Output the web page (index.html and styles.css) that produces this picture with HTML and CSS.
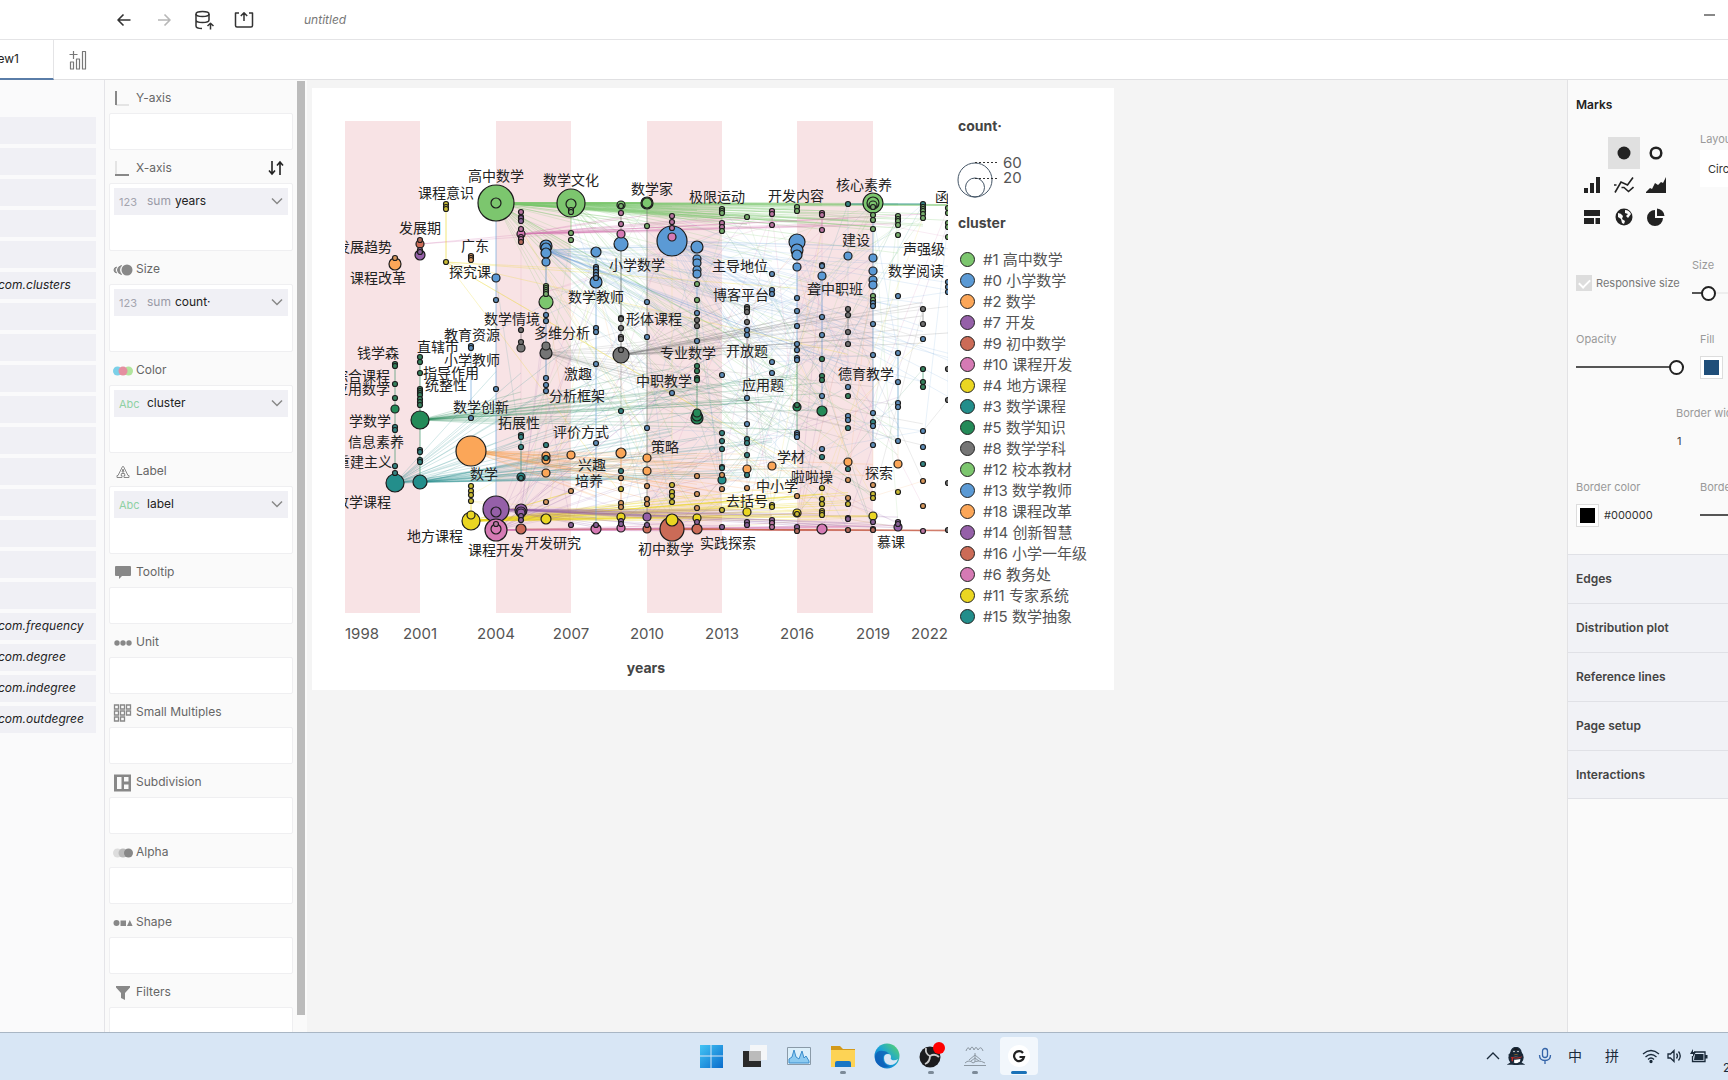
FILE: index.html
```html
<!DOCTYPE html>
<html lang="zh-CN">
<head>
<meta charset="utf-8">
<title>untitled</title>
<link rel="stylesheet" href="styles.css">
</head>
<body>
<header class="toolbar">
  <button class="tool" aria-label="Undo"><svg width="20" height="20" viewBox="0 0 20 20"><path d="M16.500 10H4.500M9.500 4.500 4 10l5.500 5.500" stroke-width="1.600"/></svg></button>
  <button class="tool dim" aria-label="Redo"><svg width="20" height="20" viewBox="0 0 20 20"><path d="M4 10h11.500M10.500 4.500 16 10l-5.500 5.500" stroke-width="1.600"/></svg></button>
  <button class="tool" aria-label="Data source"><svg width="20" height="20" viewBox="0 0 20 20"><ellipse cx="8.500" cy="4" rx="6.500" ry="2.500"/><path d="M2 4v12c0 1.400 2.500 2.500 6 2.500M15 4v6M2 10c0 1.500 2.700 2.500 6.500 2.500 2.800 0 6.500-.8 6.500-2.500M16.500 19.500v-6M13.500 16l3-2.800 3 2.800"/></svg></button>
  <button class="tool" aria-label="Export"><svg width="20" height="20" viewBox="0 0 20 20"><path d="M5 3H1.500v12.500q0 1.500 1.500 1.500h14q1.500 0 1.500-1.500V3H15M10 11V3M6.800 6 10 2.800 13.200 6"/></svg></button>
  <span class="doc-name">untitled</span>
  <button class="minimize" aria-label="Minimize"></button>
</header>
<nav class="tabs">
  <a class="tab" href="#view1">View1</a>
  <button class="tool add-view" aria-label="Add view"><svg width="20" height="20" viewBox="0 0 20 20"><path d="M2.500 12h3v7h-3zM8.500 9h3v10h-3zM14.500 1.500h3V19h-3zM5.500 1v8M1.500 4.500h8" stroke-width="1.200"/></svg></button>
</nav>
<main class="workspace">
  <ul class="fields">
    <li></li><li></li><li></li><li></li><li></li><li>com.clusters</li><li></li><li></li><li></li><li></li>
    <li></li><li></li><li></li><li></li><li></li><li></li><li>com.frequency</li><li>com.degree</li><li>com.indegree</li><li>com.outdegree</li>
  </ul>
  <div class="shelves">
    <section><h3><svg viewBox="0 0 20 20"><path d="M3 17h13" stroke="#ddd" stroke-width="1.500"/><path d="M3 3v14" stroke="#888" stroke-width="2"/></svg>Y-axis</h3><div class="drop"></div></section>
    <section><h3><svg viewBox="0 0 20 20"><path d="M3 3v14" stroke="#ddd" stroke-width="1.500"/><path d="M2 17h14" stroke="#888" stroke-width="2"/></svg>X-axis<button class="swap" aria-label="Sort"><svg viewBox="0 0 20 20" fill="none" stroke="#222" stroke-width="1.600"><path d="M6 3v13M3 12.500 6 16l3-3.500M14 17V4M11 7.500l3-3.500 3 3.500"/></svg></button></h3><div class="drop tall"><button class="pill"><i class="num">123</i><em>sum</em>years<svg viewBox="0 0 12 8"><path d="M1 1.500 6 6.500 11 1.500"/></svg></button></div></section>
    <section><h3><svg viewBox="0 0 20 20" fill="#888"><circle cx="14" cy="11" r="5.500"/><path d="M8.500 6.500q-4 4.500 0 9-4-1-4-4.500t4-4.500zM3.500 8q-3 3 0 6-2.500-.5-2.500-3t2.500-3z" stroke="#888"/></svg>Size</h3><div class="drop tall"><button class="pill"><i class="num">123</i><em>sum</em>count·<svg viewBox="0 0 12 8"><path d="M1 1.500 6 6.500 11 1.500"/></svg></button></div></section>
    <section><h3><svg viewBox="0 0 20 20"><circle cx="4.500" cy="11" r="4.500" fill="#7bd0e8"/><circle cx="15.500" cy="11" r="4.500" fill="#b2e49e"/><circle cx="10" cy="11" r="4.500" fill="#e58fa0"/></svg>Color</h3><div class="drop tall"><button class="pill"><i>Abc</i>cluster<svg viewBox="0 0 12 8"><path d="M1 1.500 6 6.500 11 1.500"/></svg></button></div></section>
    <section><h3><svg viewBox="0 0 20 20" fill="none" stroke="#888"><path d="M4 16.500h5v-2H8l.5-2h3l.5 2h-1v2h5v-2h-1L10.500 5.500h-1L5 14.500H4zM9 11l1-3 1 3z"/></svg>Label</h3><div class="drop tall"><button class="pill"><i>Abc</i>label<svg viewBox="0 0 12 8"><path d="M1 1.500 6 6.500 11 1.500"/></svg></button></div></section>
    <section><h3><svg viewBox="0 0 20 20" fill="#888"><path d="M3 4h14q1 0 1 1v8q0 1-1 1H9l-3 3v-3H3q-1 0-1-1V5q0-1 1-1z"/></svg>Tooltip</h3><div class="drop"></div></section>
    <section><h3><svg viewBox="0 0 20 20" fill="#888"><circle cx="4" cy="11" r="2.700"/><circle cx="10" cy="11" r="2.700"/><circle cx="16" cy="11" r="2.700"/></svg>Unit</h3><div class="drop"></div></section>
    <section><h3><svg viewBox="0 0 20 20" fill="none" stroke="#888" stroke-width="1.300"><path d="M1.500 3h4v4h-4zM7.500 3h4v4h-4zM13.500 3h4v4h-4zM1.500 9h4v4h-4zM7.500 9h4v4h-4zM13.500 9h4v4h-4zM1.500 15h4v4h-4zM7.500 15h4v4h-4z"/></svg>Small Multiples</h3><div class="drop"></div></section>
    <section><h3><svg viewBox="0 0 20 20"><path d="M1 2.500h17v17H1zM4 5v12h4.500V5zM11 5v4.500h4.500V5zM11 12.500V17h4.500v-4.500z" fill="#888" fill-rule="evenodd"/></svg>Subdivision</h3><div class="drop"></div></section>
    <section><h3><svg viewBox="0 0 20 20"><circle cx="4.500" cy="11" r="4.500" fill="#ddd"/><circle cx="10" cy="11" r="4.500" fill="#bbb"/><circle cx="15.500" cy="11" r="4.500" fill="#888"/></svg>Alpha</h3><div class="drop"></div></section>
    <section><h3><svg viewBox="0 0 20 20" fill="#888"><circle cx="3.500" cy="11" r="3"/><path d="M7.500 8.500h5.500v5.500H7.500zM14 14l2.800-6 2.800 6z"/></svg>Shape</h3><div class="drop"></div></section>
    <section><h3><svg viewBox="0 0 20 20" fill="#888"><path d="M3 4h14v1.500L12 11v7l-4-2v-5L3 5.500z"/></svg>Filters</h3><div class="drop"></div></section>
  </div>
  <div class="scrollbar"><span></span></div>
  <div class="canvas">
    <figure class="sheet">
      <svg id="plot" class="plot" width="636" height="602" viewBox="312 88 636 602" role="img" aria-label="years"></svg>
      <figcaption class="legend">
        <h4>count·</h4>
        <svg class="sizes" width="80" height="41" viewBox="0 0 80 41"><g fill="none" stroke="#456"><circle cx="17" cy="22" r="17"/><circle cx="17" cy="29.500" r="9.500"/><path d="M17 4.500h22M17 20.500h22" stroke-dasharray="2 2" stroke="#333"/></g><text x="45" y="10">60</text><text x="45" y="25">20</text></svg>
        <h4>cluster</h4>
        <ul id="clusters" class="clusters"></ul>
      </figcaption>
    </figure>
  </div>
  <aside class="inspector">
    <div class="inner">
      <h2>Marks</h2>
      <div class="marks">
        <div class="types">
          <span></span>
          <button class="on" aria-label="Point"><svg viewBox="0 0 20 20"><circle cx="10" cy="10" r="6.500"/></svg></button>
          <button aria-label="Ring"><svg viewBox="0 0 20 20"><circle cx="10" cy="10" r="5.300" fill="none" stroke="#222" stroke-width="2.500"/></svg></button>
          <button aria-label="Bar"><svg viewBox="0 0 20 20"><path d="M2 13h4v5H2zM8 8h4v10H8zM14 2h4v16h-4z"/></svg></button>
          <button aria-label="Line"><svg viewBox="0 0 20 20" fill="none" stroke="#222" stroke-width="1.600"><path d="M1 17.500 7 7l6.500 3L19 2.500M0 10h2.500M7.500 12.500H10l4.500 4 5-4.500"/></svg></button>
          <button aria-label="Area"><svg viewBox="0 0 20 20"><path d="M0 18v-1l4-4 2 1 3-6 3 2 3-3 2 1 3-6v16z"/></svg></button>
          <button aria-label="Treemap"><svg viewBox="0 0 20 20"><path d="M2 3h16v6H2zM2 11h10v6H2zM13.500 11H18v6h-4.500z"/></svg></button>
          <button aria-label="Map"><svg viewBox="0 0 20 20"><circle cx="10" cy="10" r="8.500"/><path d="M4 6q3 0 5 3l-1 3 3 2-1 3-2-1-1-4-3-2zM11 3q4 0 6 4l-3 4-2-2 2-2-3-1z" fill="#fafafa"/></svg></button>
          <button aria-label="Pie"><svg viewBox="0 0 20 20"><path d="M9 3v8h8a8 8 0 1 1-8-8zM11 1.500A8 8 0 0 1 18.500 9H11z"/></svg></button>
        </div>
        <div class="layout"><label for="layout">Layout</label><select id="layout"><option>Circle</option></select></div>
      </div>
      <div class="row">
        <label class="check"><input type="checkbox" checked disabled>Responsive size</label>
        <div class="field"><label for="size">Size</label><div class="control"><input id="size" type="range" class="low" value="10"></div></div>
      </div>
      <div class="row">
        <div class="field half"><label for="opacity">Opacity</label><div class="control"><input id="opacity" type="range" value="100"></div></div>
        <div class="field"><label for="fill">Fill</label><div class="control"><input id="fill" type="color" value="#1f4e79"></div></div>
      </div>
      <div class="row indent">
        <div class="field"><label for="bw">Border width</label><div class="control"><input id="bw" type="text" value="1"></div></div>
      </div>
      <div class="row">
        <div class="field half"><label for="bc">Border color</label><div class="control"><input id="bc" type="color" value="#000000">#000000</div></div>
        <div class="field"><label for="bo">Border opacity</label><div class="control"><input id="bo" type="range" value="100"></div></div>
      </div>
    </div>
    <button class="fold">Edges</button><button class="fold">Distribution plot</button><button class="fold">Reference lines</button><button class="fold">Page setup</button><button class="fold">Interactions</button>
  </aside>
</main>
<footer class="taskbar">
  <div class="apps">
    <button aria-label="Start"><svg viewBox="0 0 26 26"><defs><linearGradient id="w" x1="0" y1="0" x2="1" y2="1"><stop stop-color="#44c5f5"/><stop offset="1" stop-color="#0a6ccc"/></linearGradient></defs><path d="M2 2h10.500v10.500H2zM13.500 2H25v10.500H13.500zM2 13.500h10.500V25H2zM13.500 13.500H25V25H13.500z" fill="url(#w)"/></svg></button>
    <button aria-label="Task view"><svg viewBox="0 0 26 26"><path d="M1 8h18v16H1z" fill="#2a2a2a"/><path d="M8 2h17v15H8z" fill="#f4f6f8"/><path d="M7 8h12v10H7z" fill="#bbb"/></svg></button>
    <button aria-label="Monitor"><svg viewBox="0 0 26 26"><path d="M1.500 4.500h23v17h-23z" fill="#dceffa" stroke="#8a9aa8"/><path d="M3 20v-4l3-2 2-7 2 7 3 2 3-8 2 7 2-2 3 5v2z" fill="#8ccaf0" stroke="#3a8dcc"/></svg></button>
    <button class="run" aria-label="Files"><svg viewBox="0 0 26 26"><path d="M1 3h9l3 3h12v4H1z" fill="#d49a1a"/><path d="M1 7h24v17H1z" fill="#fdd355"/><path d="M5 24v-4q0-2 2-2h12q2 0 2 2v4z" fill="#1976c4"/></svg></button>
    <button aria-label="Edge"><svg viewBox="0 0 26 26"><defs><linearGradient id="e" x1="0" y1="1" x2="1" y2="0"><stop stop-color="#0b5cc0"/><stop offset=".5" stop-color="#1aa3d8"/><stop offset="1" stop-color="#5fd860"/></linearGradient></defs><circle cx="13" cy="13" r="12.500" fill="url(#e)"/><path d="M10 15q0-4 4-4 3 0 3 3-1 2 1 3 3 1 6-1-2 6-8 6-6-1-6-7z" fill="#d8e6f5"/><path d="M1 13q2-6 8-5 4 0 6 3-5-1-6 4 0 7 7 8-9 4-14-4-1-3-1-6z" fill="#0d58b4" opacity=".7"/></svg></button>
    <button class="run" aria-label="Recorder"><svg viewBox="0 0 26 26"><circle cx="12" cy="14" r="10.500" fill="#1c1c1e"/><path d="M12 13q-5-2-4-8M12 13q5-3 9 1M12 13q0 6-5 8" fill="none" stroke="#ccc" stroke-width="1.800"/><circle cx="21" cy="5" r="6" fill="#f00"/></svg></button>
    <button class="run" aria-label="Gallery"><svg viewBox="0 0 26 26" fill="none" stroke="#8d98a2"><path d="M4 8q2-6 4-1 2-6 4 0 2-5 4 0 3-5 5 1M13 10v9M7 17l6-5 6 5M9 18l4-3 4 3M3 20q4-4 8 0 5-4 12 0M2 22.500h22"/></svg></button>
    <button class="run active" aria-label="Graphs"><svg viewBox="0 0 26 26"><circle cx="13" cy="13" r="11" fill="#fff"/><path d="M17 10a5 5 0 1 0 1 4h-4.500" fill="none" stroke="#222" stroke-width="2.200"/></svg></button>
  </div>
  <div class="tray">
    <svg width="14" viewBox="0 0 14 16"><path d="M1 11l6-6 6 6"/></svg>
    <svg width="18" viewBox="0 0 18 18" stroke="none"><ellipse cx="9" cy="10.500" rx="7" ry="7" fill="#16181c"/><circle cx="9" cy="5.500" r="5" fill="#16181c"/><ellipse cx="9" cy="12.500" rx="5" ry="4.500" fill="#fff"/><path d="M2.500 8.500q6.500 3 13 0v2q-4 2-9 1.500V15H4v-3.500z" fill="#d8281e"/><circle cx="7" cy="4.500" r="1.400" fill="#fff"/><circle cx="11" cy="4.500" r="1.400" fill="#fff"/><path d="M5.500 7.500q3.500-2 7 0-3.500 2-7 0zM2 17q3-2 6 0zM16 17q-3-2-6 0z" fill="#f5a31c"/></svg>
    <svg class="mic" width="14" viewBox="0 0 14 18"><rect x="4.500" y="1.500" width="5" height="9" rx="2.500"/><path d="M1.500 8q0 5.500 5.500 5.500T12.500 8M7 14v3"/></svg>
    <span>中</span><span>拼</span>
    <svg width="18" viewBox="0 0 18 16"><path d="M1 6q8-7 16 0M3.500 9q5.500-5 11 0M6 11.500q3-3 6 0"/><circle cx="9" cy="13.500" r="1" fill="#1a2a3a"/></svg>
    <svg width="16" viewBox="0 0 16 16"><path d="M1 6h2.500L7 2.500v11L3.500 10H1zM9.500 5.500q2 2.500 0 5M11.500 3.500q3.500 4.500 0 9"/></svg>
    <svg width="18" viewBox="0 0 18 16"><path d="M4 4h11v9.500H2.500V8"/><path d="M5 6h8.500v6H4zM15 7h2.500v3.500H15zM3 1 0 6h3v3l3-5H3z" fill="#1a2a3a" stroke="none"/></svg>
    <time>2022</time>
  </div>
</footer>
<script src="script.js"></script>
</body>
</html>
```
FILE: styles.css
```css
* { box-sizing: border-box; margin: 0; padding: 0; }
body { height: 100vh; display: flex; flex-direction: column; overflow: hidden; background: #fff; color: #222; font: 12px/16px Inter, "Noto Sans CJK SC", sans-serif; }
button { border: 0; background: none; font: inherit; color: inherit; }
ul { list-style: none; }
a { color: inherit; text-decoration: none; }

.toolbar { flex: none; height: 40px; display: flex; align-items: center; gap: 20px; padding: 0 13px 0 114px; border-bottom: 1px solid #e4e4e6; }
.tool { width: 20px; height: 20px; }
.tool svg { display: block; fill: none; stroke: #333; stroke-width: 1.500; stroke-linejoin: round; }
.tool.dim { opacity: .35; }
.doc-name { margin-left: 30px; color: #777; font-style: italic; }
.minimize { width: 11px; height: 2px; margin: 0 0 10px auto; background: #888; }

.tabs { flex: none; height: 40px; display: flex; align-items: center; gap: 14px; border-bottom: 1px solid #e0e0e2; }
.tab { width: 54px; height: 40px; display: flex; justify-content: flex-end; padding: 11px 34px 0 0; border-right: 1px solid #e4e4e6; border-bottom: 2px solid #5a7da8; }
.add-view svg { stroke: #777; }

.workspace { flex: 1; min-height: 0; display: flex; }
.fields { flex: none; width: 105px; padding: 37px 8px 0 0; display: flex; flex-direction: column; gap: 4px; background: #fafafb; border-right: 1px solid #e4e4e8; overflow: hidden; font-style: italic; text-indent: -2px; }
.fields li { flex: none; height: 27px; line-height: 26px; background: #f0f0f5; }

.shelves { flex: none; width: 192px; padding: 0 4px; overflow: hidden; background: #fafafa; }
.shelves h3 { height: 33px; display: flex; align-items: center; gap: 3px; padding: 3px 7px 0 4px; font-size: 12px; font-weight: 400; color: #666; }
.shelves h3 svg { width: 20px; height: 20px; overflow: visible; }
.swap { margin-left: auto; }
.swap svg { display: block; }
.drop { height: 37px; padding: 4px; background: #fff; border: 1px solid #efeff1; border-radius: 2px; }
.drop.tall { height: 68px; }
.pill { width: 100%; height: 27px; display: flex; align-items: center; padding: 0 5px 2px; background: #f0f0f5; color: #222; }
.pill i { width: 28px; font-size: 11px; font-style: normal; color: #8fd0a4; text-align: left; padding-top: 2px; }
.pill i.num { color: #a4a4ae; }
.pill em { margin-right: 4px; font-style: normal; color: #999aa6; }
.pill svg { width: 12px; height: 8px; margin-left: auto; fill: none; stroke: #888; stroke-width: 1.500; }

.scrollbar { flex: none; width: 10px; padding: 1px 0 17px; background: #fafafa; }
.scrollbar span { display: block; width: 8px; height: 100%; background: #bbb; }
.canvas { flex: 1; min-width: 0; padding: 8px 5px; background: #f4f4f4; overflow: hidden; }
.sheet { width: fit-content; display: flex; background: #fff; }
.plot { display: block; }
.plot .name { font-size: 14px; text-anchor: middle; fill: #222; }
.plot .tick { font-size: 15px; text-anchor: middle; fill: #555; }
.plot .first { text-anchor: start; }
.plot .last { text-anchor: end; }
.plot .axis { font-size: 14px; font-weight: 700; text-anchor: middle; fill: #444; }
.legend { width: 166px; padding: 28px 0 0 10px; font-size: 15px; color: #555; }
.legend h4 { font-size: 14px; line-height: 20px; color: #444; }
.sizes { display: block; margin: 22px 0 14px; overflow: visible; }
.sizes text { font-size: 15px; fill: #555; }
.clusters { padding: 16px 0 0 2px; }
.clusters li { display: flex; align-items: center; gap: 8px; height: 21px; line-height: 21px; white-space: nowrap; }
.clusters i { width: 15px; height: 15px; border: 1px solid #222; border-radius: 50%; }

.inspector { flex: none; width: 161px; overflow: hidden; background: #fafafa; border-left: 1px solid #e2e2e4; font-size: 11px; color: #888; }
.inner { width: 300px; padding: 2px 8px 27px; }
.inner h2 { height: 45px; line-height: 45px; font-size: 12px; font-weight: 600; color: #222; }
.marks { display: flex; gap: 28px; height: 130px; }
.types { display: grid; grid-template-columns: repeat(3, 32px); grid-template-rows: repeat(3, 32px); padding-top: 10px; }
.types button { display: grid; place-items: center; }
.types .on { background: #e0e0e0; }
.types svg { width: 20px; height: 20px; fill: #222; }
.types svg[fill=none] { fill: none; }
.layout { padding-top: 4px; }
.layout label { display: block; margin-bottom: 3px; color: #999; }
.layout select { appearance: none; width: 120px; height: 37px; padding: 0 8px; border: 0; background: #fff; font: inherit; color: #333; }
.row { display: flex; height: 48px; margin-bottom: 26px; }
.row:last-child { margin-bottom: 0; }
.row.indent { padding-left: 100px; }
.check { display: flex; align-items: center; gap: 4px; width: 116px; padding-top: 4px; color: #777; white-space: nowrap; }
.check input { appearance: none; position: relative; flex: none; width: 16px; height: 16px; background: #ddd; }
.check input::after { content: ""; position: absolute; left: 3px; top: 4px; width: 9px; height: 5px; border: solid #fff; border-width: 0 0 2px 2px; transform: rotate(-45deg); }
.field { white-space: nowrap; }
.field.half { width: 124px; }
.field label { display: block; color: #999; }
.control { display: flex; align-items: center; gap: 5px; height: 24px; margin-top: 8px; color: #333; }
.control input[type=text] { width: 60px; border: 0; background: none; font: inherit; color: #444; padding-left: 1px; }
input[type=color] { appearance: none; width: 23px; height: 23px; padding: 3px; border: 1px solid #ddd; background: #fff; }
input[type=color]::-webkit-color-swatch-wrapper { padding: 0; }
input[type=color]::-webkit-color-swatch { border: 0; }
input[type=range] { appearance: none; width: 108px; height: 15px; background: linear-gradient(#555, #555) center / 100% 2px no-repeat; }
input[type=range].low { background-image: linear-gradient(90deg, #555 16px, #eee 16px); }
input[type=range]::-webkit-slider-thumb { appearance: none; width: 15px; height: 15px; background: #fff; border: 2px solid #222; border-radius: 50%; }
.fold { display: block; width: 100%; height: 49px; padding-left: 8px; text-align: left; font-size: 12px; font-weight: 600; color: #444; background: #f1f2f6; border-top: 1px solid #e0e1e6; }
.fold:last-child { border-bottom: 1px solid #e0e1e6; }

.taskbar { flex: none; height: 48px; display: grid; grid-template-columns: 1fr auto 1fr; align-items: center; background: #d8e6f5; border-top: 1px solid #a9b6c4; overflow: hidden; }
.apps { grid-column: 2; display: flex; gap: 6px; padding: 0 0 2px 2px; }
.apps button { position: relative; width: 38px; height: 38px; display: grid; place-items: center; border-radius: 4px; }
.apps button svg { width: 26px; height: 26px; overflow: visible; }
.apps .run::after { content: ""; position: absolute; bottom: 1px; left: 16px; width: 6px; height: 3px; border-radius: 2px; background: #7c8a98; }
.apps .active { background: #f2f7fc; }
.apps .active::after { left: 11px; width: 16px; background: #1b72b8; }
.tray { justify-self: end; display: flex; align-items: center; height: 47px; gap: 15px; width: 242px; padding-bottom: 2px; white-space: nowrap; font-size: 14px; color: #1a2a3a; }
.tray svg { flex: none; height: 18px; fill: none; stroke: #1a2a3a; stroke-width: 1.300; }
.tray span { margin-right: 8px; }
.tray svg + svg { margin-left: -8px; }
.tray svg.mic { stroke: #3464a8; margin: 0 1px 0 -2px; }
.tray time { font-size: 12px; padding-top: 24px; }
```
FILE: script.js
```js
const NS = 'http://www.w3.org/2000/svg';
const plot = document.getElementById('plot');
const COLORS = { g: '#7cc66e', b: '#5b9ad5', o: '#fba658', p: '#9560a8', r: '#cb6b57', k: '#d57ab4', y: '#ead622', t: '#238e8b', d: '#248a58', x: '#757575' };
const LEFT = 345, STEP = 201 / 8, RIGHT = 948;
const px = year => Math.round(LEFT + (year - 1998) * STEP);

function add(parent, tag, attrs, text) {
  const node = document.createElementNS(NS, tag);
  for (const key in attrs) node.setAttribute(key, attrs[key]);
  if (text) node.textContent = text;
  parent.appendChild(node);
  return node;
}

/* Each mark: vertical position, colour key, optional radius. */
const MARKS = {
  2000: '258o 264o6 364d 366d 384d 398d 409d4 427t 430t 466t 473t 483t9',
  2001: '240r 244r4 250p 252p 255p5 357d 362d 373d 389d 391d 393d 395d 399d 402d 405d 420d9 450t 452t 460t 462t 482t7',
  2002: '204y 207y 209y 262y',
  2003: '256o 258o 260o 346b 348b 418b 451o15 486y 491y 495y 501y 515y4 521y9',
  2004: '203g18 203g5 278b4 300b 389b 509p13 512p5 530k11 529k5 524k',
  2005: '212k 217k 218p 221p 229k 234k4 237k 239k 242r 330x 342x 348x4 435t 437t 447t 477t4 478t 510p6 512p5 513p4 516p 520p 529r5',
  2006: '246b6 248b5 253b5 262b4 286g 288g 290g 292g 294g 302g7 315b 321b 346x4 353x6 378b 385b 391b 445t 456o4 458t 460o4 473o4 502o 519y5',
  2007: '203g14 204g5 210g 212g 233g 240g 455o4 491o 525p',
  2008: '252b5 267b 269b 272b 275b 278b 282b6 328b 332b 364b 443b 525p 529k5',
  2009: '205g4 206g 213k 224k 234k4 244b7 318x 319x 328x 337x 339x 350x 355x8 411t 453o5 471t 478o 489y 503o 507o 517y4 521p 524p 528k4',
  2010: '203g6 203g5 226g 302b 337b 428b 458o4 471o4 486o 499o 504o 517p4 525p 529r4',
  2011: '216k 222k 228k 241b15 237k4 393b 485y 492y 496y 502y 520y6 529r12',
  2012: '247b6 259b4 263b4 270b4 274b4 284g 300g 313b 320x 326x 341b 366d 371d 378d 380d 413d4 416d5 418d6 476o 494o 508o 518y4 522p 529r5',
  2013: '209g 211g 213g 223k 227k 231g 375b 433t 441t 449t 467t 468t 475o 480t4 489o 510y 527p',
  2014: '217g 307x 309x 312x 322x 330b 335b 398b 424b 439t 443t 455t 469o4 475t 488o 512y4 522p 525p',
  2015: '211k 214k 225k 274b 290b 294b 362b 373b 466o4 505y 507y 520p 523k 527k',
  2016: '207g 211g 242b8 250b6 255b5 267b4 298b 311b 326b 344b 350b 358b 360b 405d 407d4 433b 435b 437b 496o 513y4 514y 527p 531r',
  2017: '213k 215k 230k 265b 266b 276b4 317b 335b 359d 376d 380d 396b 411d5 449b 457t 488y 499y 504y 511y 513y 515y 529k5',
  2018: '204t 256b4 309x 315x 332x 344x 387b 396d 416b 420b 428t 462o4 469t 480o 498o 504y 518p 519p 530r',
  2019: '203g10 203g6 205g4 207g 215g 220g 229g 258b4 271b4 280b4 285b4 296g 300g 303b 306b 324b 355b 413b 422t 426b 445b 485o 494y 498y 516y4 522p 529r 530r',
  2020: '216g 219g 221g 225g 235g 296b 353b 382b 403b 407b 441b 464o4 492y 522p 524p 527p4',
  2021: '204t 207g 209g 211g 214g 218g 309x 324x 339b 369d 382d 387d 431b 447b 464t 481o 506o 531k',
  2022: '208g 213g 223g 227g 237g 282b 287b 292b 369x 400x 483x 530x'
};
const points = [];
for (const year in MARKS) {
  for (const item of MARKS[year].split(' ')) {
    const [, y, c, r] = item.match(/(\d+)([a-z])(\d*)/);
    points.push({ year: +year, x: px(year), y: +y, c, r: +r || 3 });
  }
}

for (let year = 1998; year < 2022; year += 6)
  add(plot, 'rect', { x: px(year), y: 121, width: px(year + 3) - px(year), height: 492, fill: '#f8e3e5' });

const clip = add(add(plot, 'defs', {}), 'clipPath', { id: 'area' });
add(clip, 'rect', { x: LEFT, y: 121, width: RIGHT - LEFT, height: 492 });
const area = add(plot, 'g', { 'clip-path': 'url(#area)' });

const line = (x1, y1, x2, y2, c, opacity, width = 1) =>
  add(area, 'line', { x1, y1, x2, y2, stroke: COLORS[c], 'stroke-opacity': opacity, 'stroke-width': width });

let seed = 7;
const random = () => (seed = (seed * 16807) % 2147483647) / 2147483647;

/* Background links between keywords. */
for (let i = 0; i < 300; i++) {
  const a = points[Math.floor(random() * points.length)], b = points[Math.floor(random() * points.length)];
  if (a.year < 2003 || Math.abs(a.year - b.year) > 9 || b.year < 2004) continue;
  line(a.x, a.y, b.x, b.y, a.c, .14);
}
/* Links that fan out of the hubs: year, y, colour, target range, count, opacity. */
const FANS = [
  [2004, 203, 'g', 203, 228, 34, .3], [2007, 203, 'g', 203, 235, 24, .25], [2004, 203, 'g', 250, 520, 22, .2],
  [2007, 203, 'g', 250, 500, 12, .18], [2005, 234, 'k', 213, 232, 14, .3], [2001, 244, 'k', 225, 240, 2, .25],
  [2006, 250, 'b', 240, 410, 34, .15], [2011, 241, 'b', 245, 430, 26, .15], [2009, 355, 'x', 300, 345, 18, .2],
  [2006, 353, 'x', 300, 470, 16, .15], [2000, 483, 't', 340, 480, 26, .2], [2001, 482, 't', 430, 482, 20, .2],
  [2001, 420, 'd', 366, 432, 22, .22], [2003, 451, 'o', 454, 505, 30, .22], [2003, 521, 'y', 488, 520, 34, .3],
  [2004, 509, 'p', 510, 528, 24, .25], [2004, 530, 'p', 250, 500, 16, .15], [2004, 530, 'k', 525, 531, 12, .35],
  [2011, 529, 'r', 529, 531, 10, .5], [2002, 262, 'y', 240, 500, 6, .25]
];
for (const [year, y, c, lo, hi, count, opacity] of FANS) {
  for (let i = 0; i < count; i++) {
    const span = Math.max(1, Math.ceil((.2 + .8 * random()) * Math.min(16, 2022 - year)));
    line(px(year), y, px(year + span), lo + random() * (hi - lo), c, opacity);
  }
}
line(px(2004), 203, px(2010), 203, 'g', .9, 2);
line(px(2010), 204, px(2022), 205, 'g', .6, 2);
line(px(2018), 204, px(2021), 204, 't', .8);
line(px(2003), 520, px(2019), 516, 'y', .4, 2);
line(px(2005), 529, px(2022), 530, 'r', .6);
/* Links within one year. */
for (const [year, y1, y2, c] of [
  [2000, 364, 483, 'd'], [2001, 357, 482, 'd'], [2002, 204, 262, 'y'], [2003, 486, 521, 'y'], [2003, 346, 418, 'b'], [2004, 203, 530, 'b'],
  [2005, 212, 242, 'k'], [2005, 330, 348, 'x'], [2005, 435, 478, 't'], [2006, 246, 391, 'b'], [2007, 203, 240, 'g'], [2008, 252, 443, 'b'],
  [2008, 443, 529, 'b'], [2009, 205, 355, 'x'], [2009, 453, 528, 'o'], [2010, 203, 529, 'x'], [2011, 216, 241, 'k'], [2012, 247, 300, 'b'],
  [2012, 300, 418, 'd'], [2013, 209, 231, 'g'], [2013, 433, 480, 't'], [2014, 307, 475, 'x'], [2015, 211, 225, 'k'], [2016, 242, 360, 'b'],
  [2016, 360, 437, 'd'], [2017, 213, 230, 'k'], [2017, 265, 411, 'b'], [2017, 488, 515, 'y'], [2018, 309, 344, 'x'], [2019, 203, 355, 'b'],
  [2019, 355, 445, 'b'], [2020, 353, 441, 'b'], [2021, 309, 324, 'x'], [2021, 369, 387, 'd']
]) line(px(year), y1, px(year), y2, c, .6);

points.sort((a, b) => b.r - a.r);
for (const p of points) {
  const fill = p.r > 3 ? COLORS[p.c] : `color-mix(in srgb, ${COLORS[p.c]} 75%, #666)`;
  const mark = add(area, 'circle', { cx: p.x, cy: p.y, r: p.r === 3 ? 2.5 : p.r, stroke: '#1c1c1c', 'stroke-width': 1.2 });
  mark.style.fill = fill;
}

const NAMES = '高中数学,496,176;数学文化,571,180;课程意识,446,193;发展期,420,228;发展趋势,364,247;课程改革,378,278;广东,475,246;探究课,470,272;数学情境,512,319;教育资源,472,335;多维分析,562,333;直辖市,438,347;小学教师,472,360;钱学森,378,353;数学教师,596,297;数学家,652,189;小学数学,637,265;极限运动,717,197;开发内容,796,196;核心素养,864,185;函数,949,197;建设,856,240;声强级,924,249;数学阅读,916,271;主导地位,740,266;博客平台,741,295;聋中职班,835,289;形体课程,654,319;专业数学,688,353;开放题,747,351;综合课程,362,376;应用数学,362,389;指导作用,451,373;统整性,446,385;学数学,370,421;信息素养,376,442;重建主义,364,462;数学课程,363,502;数学创新,481,407;拓展性,519,423;数学,484,474;地方课程,435,536;课程开发,496,550;开发研究,553,543;激趣,578,374;分析框架,577,396;评价方式,581,432;兴趣,592,465;培养,589,481;中职教学,664,381;应用题,763,385;德育教学,866,374;策略,665,447;学材,791,457;啦啦操,812,477;探索,879,473;中小学,777,486;去括号,747,501;初中数学,666,549;实践探索,728,543;慕课,891,542';
for (const entry of NAMES.split(';')) {
  const [name, x, y] = entry.split(',');
  add(area, 'text', { x, y: +y + 5, class: 'name' }, name);
}
for (let year = 1998; year <= 2022; year += 3)
  add(plot, 'text', { x: px(year), y: 639, class: 'tick' + (year === 1998 ? ' first' : year === 2022 ? ' last' : '') }, String(year));
add(plot, 'text', { x: 646, y: 673, class: 'axis' }, 'years');

const CLUSTERS = [['g', '#1 高中数学'], ['b', '#0 小学数学'], ['o', '#2 数学'], ['p', '#7 开发'], ['r', '#9 初中数学'], ['k', '#10 课程开发'], ['y', '#4 地方课程'], ['t', '#3 数学课程'], ['d', '#5 数学知识'], ['x', '#8 数学学科'], ['g', '#12 校本教材'], ['b', '#13 数学教师'], ['o', '#18 课程改革'], ['p', '#14 创新智慧'], ['r', '#16 小学一年级'], ['k', '#6 教务处'], ['y', '#11 专家系统'], ['t', '#15 数学抽象']];
const list = document.getElementById('clusters');
for (const [c, name] of CLUSTERS) {
  const item = document.createElement('li');
  const dot = document.createElement('i');
  dot.style.background = COLORS[c];
  item.append(dot, name);
  list.append(item);
}
```
